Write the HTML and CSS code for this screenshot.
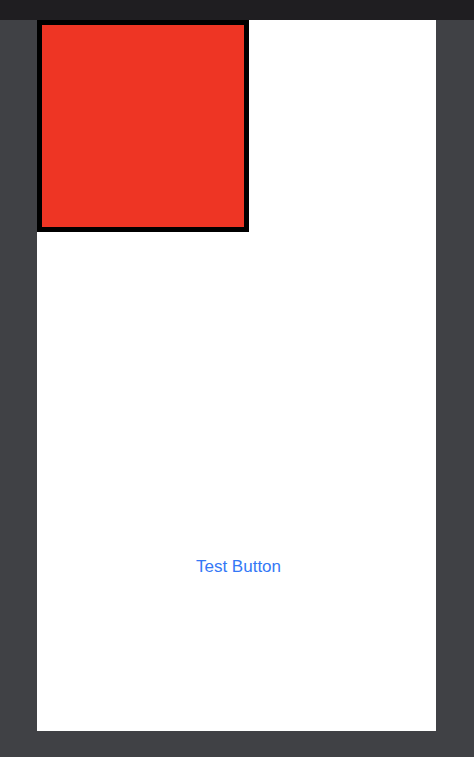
FILE: index.html
```html
<!DOCTYPE html>
<html lang="en">
<head>
  <meta charset="UTF-8">
  <meta name="viewport" content="width=device-width, initial-scale=1.0">
  <title>Test</title>
  <link rel="stylesheet" href="styles.css">
</head>
<body>
  <div class="topbar"></div>
  <div class="stage">
    <div class="screen">
      <div class="square"></div>
      <button type="button" class="test-button">Test Button</button>
    </div>
  </div>
</body>
</html>
```

FILE: styles.css
```css
body
{
  margin:0;
  background-color:#404145;
  font-family:'Liberation Sans', Arial, sans-serif;
}

div.topbar
{
  height:20px;
  background-color:#1f1e21;
}

div.stage
{
  padding-left:37px;
}

div.screen
{
  width:399px;
  height:711px;
  background-color:#ffffff;
  box-shadow:0 1px 0 #8a8b8f;
  display:flex;
  flex-direction:column;
  align-items:flex-start;
}

div.square
{
  box-sizing:border-box;
  width:212px;
  height:212px;
  background-color:#ee3524;
  border:5px solid #000000;
}

button.test-button
{
  align-self:center;
  margin-top:324px;
  margin-left:4px;
  padding:0;
  border:none;
  background:none;
  color:#3478f6;
  font-family:'Liberation Sans', Arial, sans-serif;
  font-size:17px;
  line-height:21px;
}
```
